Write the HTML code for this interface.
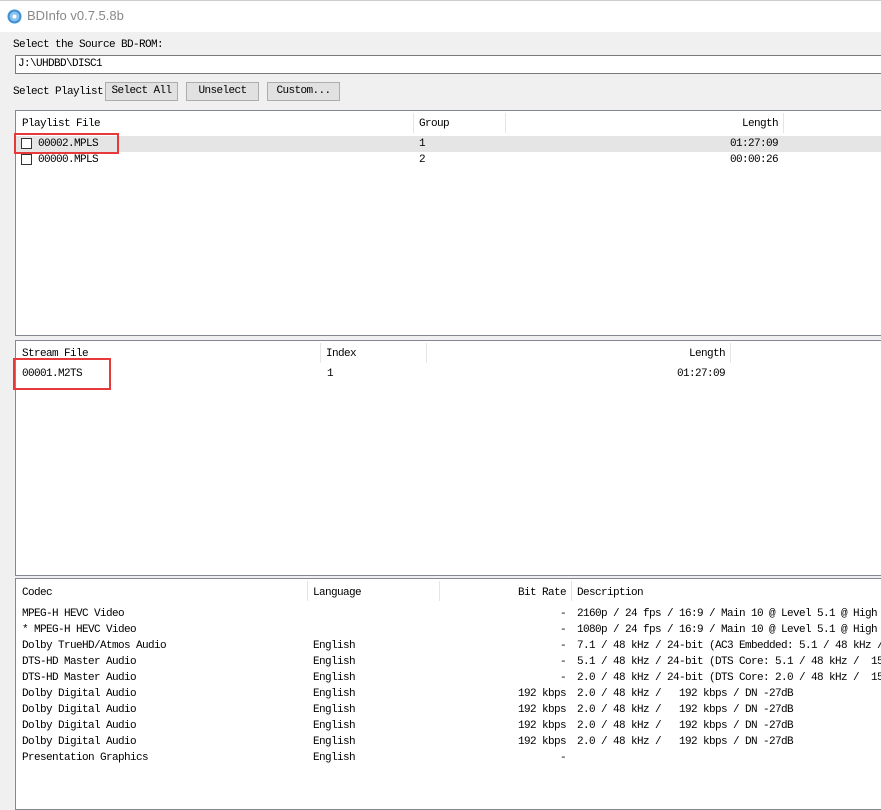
<!DOCTYPE html>
<html><head><meta charset="utf-8"><style>
body{margin:0;width:881px;height:800px;overflow:hidden;background:#f0f0f0;position:relative;font-family:"Liberation Mono","Noto Sans CJK SC",monospace;font-size:11px;letter-spacing:-0.6px;color:#000}
.a{position:absolute;white-space:pre}
.title{position:absolute;left:0;top:0;width:881px;height:31px;background:#fff;border-top:1px solid #ccc}
.panel{position:absolute;left:15px;width:880px;background:#fff;border:1px solid #828790}
.btn{position:absolute;height:19px;background:#e1e1e1;border:1px solid #adadad;text-align:center;line-height:17px;box-sizing:border-box}
.div{position:absolute;width:1px;height:20px;background:#e5e5e5}
.red{position:absolute;border:2px solid #e8393a;box-sizing:border-box}
.r{text-align:right}
</style></head><body>
<div class="title">
<svg class="a" style="left:7px;top:8px" width="15" height="15" viewBox="0 0 15 15"><circle cx="7.5" cy="7.5" r="7" fill="#3d8fd6"/><circle cx="7.5" cy="7.5" r="5" fill="#8cc2ee"/><circle cx="7.5" cy="7.5" r="2" fill="#fff"/></svg>
<div class="a" style="left:27px;top:7px;font-family:'Liberation Sans',sans-serif;font-size:13px;letter-spacing:0;color:#888">BDInfo v0.7.5.8b</div>
</div>
<div class="a" style="left:13px;top:39px">Select the Source BD-ROM:</div>
<div class="a" style="left:15px;top:55px;width:870px;height:19px;background:#fff;border:1px solid #7a7a7a;box-sizing:border-box"></div>
<div class="a" style="left:18px;top:58px">J:\UHDBD\DISC1</div>
<div class="a" style="left:13px;top:86px">Select Playlist</div>
<div class="btn" style="left:105px;top:82px;width:73px">Select All</div>
<div class="btn" style="left:186px;top:82px;width:73px">Unselect</div>
<div class="btn" style="left:267px;top:82px;width:73px">Custom...</div>

<div class="panel" style="top:110px;height:224px"></div>
<div class="div" style="left:413px;top:113px"></div><div class="div" style="left:505px;top:113px"></div><div class="div" style="left:783px;top:113px"></div>
<div class="a" style="left:22px;top:118px">Playlist File</div>
<div class="a" style="left:419px;top:118px">Group</div>
<div class="a r" style="left:600px;width:178px;top:118px">Length</div>
<div class="a" style="left:16px;top:136px;width:865px;height:16px;background:#e5e5e5"></div>
<div class="a" style="left:21px;top:138px;width:11px;height:11px;border:1px solid #333;box-sizing:border-box;background:#fff"></div>
<div class="a" style="left:38px;top:138px">00002.MPLS</div><div class="a" style="left:419px;top:138px">1</div><div class="a r" style="left:600px;width:178px;top:138px">01:27:09</div>
<div class="a" style="left:21px;top:154px;width:11px;height:11px;border:1px solid #333;box-sizing:border-box;background:#fff"></div>
<div class="a" style="left:38px;top:154px">00000.MPLS</div><div class="a" style="left:419px;top:154px">2</div><div class="a r" style="left:600px;width:178px;top:154px">00:00:26</div>
<div class="red" style="left:14px;top:133px;width:105px;height:21px"></div>

<div class="panel" style="top:340px;height:234px"></div>
<div class="div" style="left:320px;top:343px"></div><div class="div" style="left:426px;top:343px"></div><div class="div" style="left:730px;top:343px"></div>
<div class="a" style="left:22px;top:348px">Stream File</div>
<div class="a" style="left:326px;top:348px">Index</div>
<div class="a r" style="left:500px;width:225px;top:348px">Length</div>
<div class="a" style="left:22px;top:368px">00001.M2TS</div><div class="a" style="left:327px;top:368px">1</div><div class="a r" style="left:500px;width:225px;top:368px">01:27:09</div>
<div class="red" style="left:13px;top:358px;width:98px;height:32px"></div>

<div class="panel" style="top:578px;height:230px"></div>
<div class="div" style="left:307px;top:581px"></div><div class="div" style="left:439px;top:581px"></div><div class="div" style="left:571px;top:581px"></div>
<div class="a" style="left:22px;top:587px">Codec</div><div class="a" style="left:313px;top:587px">Language</div><div class="a r" style="left:440px;width:126px;top:587px">Bit Rate</div><div class="a" style="left:577px;top:587px">Description</div>
<div class="a" style="left:22px;top:606px;line-height:16px">MPEG-H HEVC Video
* MPEG-H HEVC Video
Dolby TrueHD/Atmos Audio
DTS-HD Master Audio
DTS-HD Master Audio
Dolby Digital Audio
Dolby Digital Audio
Dolby Digital Audio
Dolby Digital Audio
Presentation Graphics</div>
<div class="a" style="left:313px;top:606px;line-height:16px">

English
English
English
English
English
English
English
English</div>
<div class="a r" style="left:440px;width:126px;top:606px;line-height:16px">-
-
-
-
-
192 kbps
192 kbps
192 kbps
192 kbps
-</div>
<div class="a" style="left:577px;top:606px;line-height:16px">2160p / 24 fps / 16:9 / Main 10 @ Level 5.1 @ High
1080p / 24 fps / 16:9 / Main 10 @ Level 5.1 @ High
7.1 / 48 kHz / 24-bit (AC3 Embedded: 5.1 / 48 kHz /
5.1 / 48 kHz / 24-bit (DTS Core: 5.1 / 48 kHz /  15
2.0 / 48 kHz / 24-bit (DTS Core: 2.0 / 48 kHz /  15
2.0 / 48 kHz /   192 kbps / DN -27dB
2.0 / 48 kHz /   192 kbps / DN -27dB
2.0 / 48 kHz /   192 kbps / DN -27dB
2.0 / 48 kHz /   192 kbps / DN -27dB</div>
</body></html>
